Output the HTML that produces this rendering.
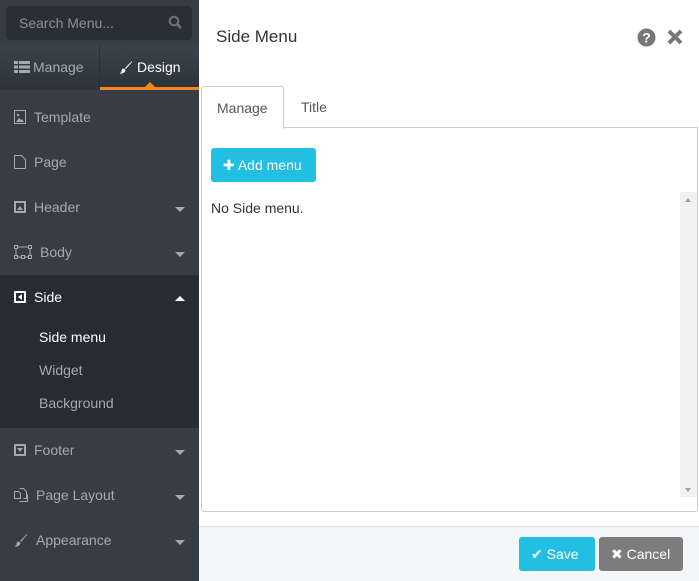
<!DOCTYPE html>
<html><head><style>
*{box-sizing:border-box;margin:0;padding:0}
body{width:699px;height:581px;overflow:hidden;font-family:"Liberation Sans",sans-serif;background:#fff;position:relative}
#sb{position:absolute;left:0;top:0;width:199px;height:581px;background:#363d45}
.search{position:absolute;left:6px;top:6px;width:186px;height:34px;background:#2a2f36;border-radius:4px;color:#8a919a;font-size:14px;padding:9px 13px}
.tabs{position:absolute;left:0;top:45px;width:199px;height:45px;background:linear-gradient(#3a434c,#2c333b)}
.tabs div{position:absolute;top:14px;font-size:14px}
.item{position:absolute;left:14px;font-size:14px;color:#a3aab2;display:flex;align-items:center}
.item svg{margin-right:8px}
.car{position:absolute;left:175px;width:0;height:0;border-left:5px solid transparent;border-right:5px solid transparent;border-top:5px solid #a3aab2}
.sub{position:absolute;left:39px;font-size:14px;color:#a3aab2}
</style></head><body>
<div id="sb">
<div class="search">Search Menu...<svg style="position:absolute;right:10px;top:9px" width="14" height="14" viewBox="0 0 14 14"><circle cx="6" cy="6" r="4.3" fill="none" stroke="#6c737b" stroke-width="2"/><path d="M9 9l4 4" stroke="#6c737b" stroke-width="2.4"/></svg></div>
<div class="tabs">
<div style="left:14px;color:#a3aab2;display:flex;align-items:center"><svg width="16" height="12" viewBox="0 0 16 12" style="margin-right:3px"><g fill="#a3aab2"><rect x="0" y="0" width="4" height="3"/><rect x="5" y="0" width="11" height="3"/><rect x="0" y="4.5" width="4" height="3"/><rect x="5" y="4.5" width="11" height="3"/><rect x="0" y="9" width="4" height="3"/><rect x="5" y="9" width="11" height="3"/></g></svg>Manage</div>
<div style="left:119px;color:#fff;display:flex;align-items:center"><svg width="14" height="14" viewBox="0 0 14 14" style="margin-right:4px"><path d="M13 1L6 8l1 1 6-7zM5 8.5c-2 0-2.5 1.5-2.5 2.5S1.5 13 0.5 13.5C3 14 6 13 6.5 10z" fill="#fff"/></svg>Design</div>
<div style="left:100px;top:42px;width:99px;height:3px;background:#f7841b"></div>
<div style="left:145px;top:37px;width:0;height:0;border-left:5px solid transparent;border-right:5px solid transparent;border-bottom:5px solid #f7841b"></div>
<div style="left:99px;top:0;width:1px;height:45px;background:#2a3038"></div>
</div>
<div class="item" style="top:109px"><svg width="12" height="14" viewBox="0 0 12 14"><rect x="0.5" y="0.5" width="11" height="13" fill="none" stroke="#a3aab2"/><path d="M2 12l3-4 2 2 1-1 2 3z" fill="#a3aab2"/><circle cx="4" cy="5" r="1.2" fill="#a3aab2"/></svg>Template</div>
<div class="item" style="top:154px"><svg width="12" height="14" viewBox="0 0 12 14"><path d="M.5.5h7l4 4v9H.5z" fill="none" stroke="#a3aab2"/></svg>Page</div>
<div class="item" style="top:199px"><svg width="12" height="12" viewBox="0 0 12 12"><rect width="12" height="12" rx="1" fill="#a3aab2"/><rect x="2" y="2" width="8" height="8" fill="#363d45"/><path d="M3 9l3-4 3 4z" fill="#a3aab2"/></svg>Header</div>
<div class="car" style="top:207px"></div>
<div class="item" style="top:244px"><svg width="19" height="14" viewBox="0 0 19 14" style="margin-right:7px"><g fill="none" stroke="#a3aab2"><rect x="2" y="2" width="14" height="10"/></g><g fill="#363d45" stroke="#a3aab2"><rect x=".5" y=".5" width="3" height="3"/><rect x="14.5" y=".5" width="3" height="3"/><rect x=".5" y="10.5" width="3" height="3"/><rect x="14.5" y="10.5" width="3" height="3"/><rect x="7.5" y="10.5" width="3" height="3"/></g></svg>Body</div>
<div class="car" style="top:252px"></div>
<div style="position:absolute;left:0;top:275px;width:199px;height:153px;background:#272c33"></div>
<div class="item" style="top:289px;color:#fff"><svg width="12" height="12" viewBox="0 0 12 12"><rect width="12" height="12" rx="1" fill="#fff"/><rect x="2" y="2" width="8" height="8" fill="#272c33"/><path d="M8 3v6L4 6z" fill="#fff"/></svg>Side</div>
<div class="car" style="top:296px;border-top:0;border-bottom:5px solid #fff"></div>
<div class="sub" style="top:329px;color:#fff">Side menu</div>
<div class="sub" style="top:362px">Widget</div>
<div class="sub" style="top:395px">Background</div>
<div class="item" style="top:442px"><svg width="12" height="12" viewBox="0 0 12 12"><rect width="12" height="12" rx="1" fill="#a3aab2"/><rect x="2" y="2" width="8" height="8" fill="#363d45"/><path d="M3 4h6L6 8z" fill="#a3aab2"/></svg>Footer</div>
<div class="car" style="top:450px"></div>
<div class="item" style="top:487px"><svg width="14" height="14" viewBox="0 0 14 14"><g fill="none" stroke="#a3aab2"><path d="M.5 3.5h4l2 2v5h-6z"/><path d="M5.5.5h4l3 3v7h-3"/><path d="M5.5 13.5h8v-7"/></g></svg>Page Layout</div>
<div class="car" style="top:495px"></div>
<div class="item" style="top:532px"><svg width="14" height="14" viewBox="0 0 14 14"><path d="M13 1L6 8l1 1 6-7zM5 8.5c-2 0-2.5 1.5-2.5 2.5S1.5 13 0.5 13.5C3 14 6 13 6.5 10z" fill="#a3aab2"/></svg>Appearance</div>
<div class="car" style="top:540px"></div>
</div>

<div style="position:absolute;left:216px;top:27px;font-size:17px;color:#333">Side Menu</div>
<svg style="position:absolute;left:637px;top:28px" width="19" height="19" viewBox="0 0 19 19"><circle cx="9.5" cy="9.5" r="9" fill="#777"/><text x="9.5" y="14.5" font-size="14" font-weight="bold" text-anchor="middle" fill="#fff" font-family="Liberation Sans">?</text></svg>
<svg style="position:absolute;left:667px;top:29px" width="16" height="16" viewBox="0 0 16 16"><path d="M2 2l12 12M14 2L2 14" stroke="#777" stroke-width="4"/></svg>

<div style="position:absolute;left:201px;top:127px;width:497px;height:385px;border:1px solid #c9cdd2;border-radius:0 0 3px 3px"></div>
<div style="position:absolute;left:201px;top:86px;width:83px;height:43px;border:1px solid #c9cdd2;border-bottom:none;border-radius:3px 3px 0 0;background:#fff;font-size:14px;color:#555;padding:13px 0 0 15px">Manage</div>
<div style="position:absolute;left:301px;top:99px;font-size:14px;color:#555">Title</div>
<div style="position:absolute;left:211px;top:148px;width:105px;height:34px;background:#23bfe3;border-radius:3px;color:#fff;font-size:14px;padding:9px 0 0 12px;font-weight:500">✚ Add menu</div>
<div style="position:absolute;left:211px;top:200px;font-size:14px;color:#333">No Side menu.</div>
<div style="position:absolute;left:680px;top:192px;width:17px;height:305px;background:#f1f1f1"></div>
<div style="position:absolute;left:685px;top:198px;border-left:3.5px solid transparent;border-right:3.5px solid transparent;border-bottom:4px solid #a3a3a3"></div>
<div style="position:absolute;left:685px;top:488px;border-left:3.5px solid transparent;border-right:3.5px solid transparent;border-top:4px solid #a3a3a3"></div>

<div style="position:absolute;left:199px;top:526px;width:500px;height:55px;background:#f3f6f9;border-top:1px solid #dfe3e7"></div>
<div style="position:absolute;left:519px;top:537px;width:76px;height:34px;background:#23bfe3;border-radius:3px;color:#fff;font-size:14px;padding:9px 0 0 12px">✔ Save</div>
<div style="position:absolute;left:599px;top:537px;width:84px;height:34px;background:#7c7c7c;border-radius:3px;color:#fff;font-size:14px;padding:9px 0 0 12px">✖ Cancel</div>
</body></html>
